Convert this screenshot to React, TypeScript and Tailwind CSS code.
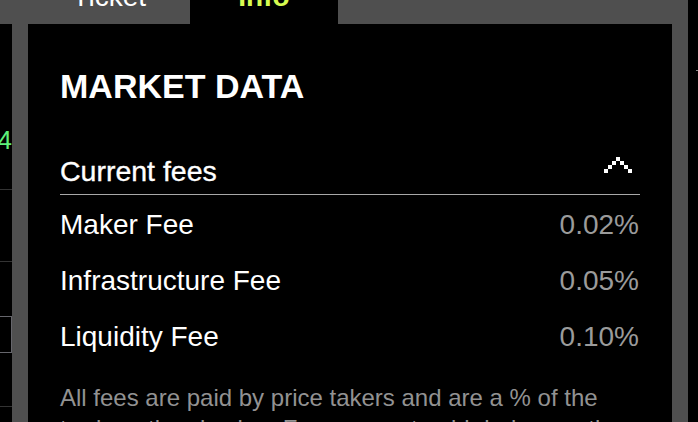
import React from "react";

const font = { fontFamily: '"Liberation Sans", Arial, Helvetica, sans-serif' };

function Chevron() {
  // pixel-art chevron, 4px squares
  return (
    <svg width="28" height="16" viewBox="0 0 28 16" shapeRendering="crispEdges" className="block">
      <rect x="12" y="0" width="4" height="4" fill="#fff" />
      <rect x="8" y="4" width="4" height="4" fill="#fff" />
      <rect x="16" y="4" width="4" height="4" fill="#fff" />
      <rect x="4" y="8" width="4" height="4" fill="#fff" />
      <rect x="20" y="8" width="4" height="4" fill="#fff" />
      <rect x="0" y="12" width="4" height="4" fill="#fff" />
      <rect x="24" y="12" width="4" height="4" fill="#fff" />
    </svg>
  );
}

const fees = [
  { label: "Maker Fee", value: "0.02%" },
  { label: "Infrastructure Fee", value: "0.05%" },
  { label: "Liquidity Fee", value: "0.10%" },
];

export default function App() {
  return (
    <div className="w-[698px] h-[422px] bg-black overflow-hidden flex flex-col" style={font}>
      {/* top tab bar */}
      <div className="h-[24px] shrink-0 flex overflow-hidden">
        <div className="w-[688px] h-[24px] flex bg-[#4f4f4f]">
          <div className="w-[190px] h-[24px] flex justify-end pr-[44px] overflow-hidden">
            <span className="text-white text-[28px] leading-[28px] -mt-[17px] whitespace-nowrap">Ticket</span>
          </div>
          <div className="w-[148px] h-[24px] bg-black flex justify-center overflow-hidden">
            <span className="text-[#d7fb50] font-bold text-[28px] leading-[28px] -mt-[17px] whitespace-nowrap">Info</span>
          </div>
        </div>
        <div className="w-[10px] h-[24px] bg-black" />
      </div>

      {/* body */}
      <div className="flex flex-1 min-h-0">
        {/* left neighbour panel slice */}
        <div className="w-[12px] shrink-0 overflow-hidden flex flex-col">
          <div className="h-[166px] shrink-0 border-b border-[#333333] flex justify-end pt-[103px]">
            <span className="text-[#5ef07a] text-[26px] leading-[26px] whitespace-nowrap">24</span>
          </div>
          <div className="h-[72px] shrink-0 border-b border-[#333333]" />
          <div className="h-[54px] shrink-0" />
          <div className="h-[37px] shrink-0 w-[40px] -ml-[28px] border border-[#66666c]" />
          <div className="h-[54px] shrink-0 border-b border-[#333333]" />
        </div>

        {/* framed panel */}
        <div className="w-[676px] shrink-0 bg-[#4f4f4f] px-[16px] flex">
          <div className="w-[644px] bg-black pt-[45px] px-[32px] flex flex-col">
            <h1 className="text-white font-bold text-[34px] leading-[34px] whitespace-nowrap">MARKET DATA</h1>

            <div className="mt-[54px] flex justify-between items-start border-b-[1.5px] border-[#a8a8a8] pb-[9px]">
              <span className="text-white text-[28.5px] leading-[28px] [-webkit-text-stroke:0.35px_white]">Current fees</span>
              <span className="mr-[8px]">
                <Chevron />
              </span>
            </div>

            <div className="mt-[2px] flex flex-col">
              {fees.map((f) => (
                <div key={f.label} className="h-[56px] flex justify-between text-[28px] leading-[56px]">
                  <span className="text-white">{f.label}</span>
                  <span className="text-[#9b9b9b] pr-[1px]">{f.value}</span>
                </div>
              ))}
            </div>

            <p className="mt-[17px] text-[#929292] text-[24px] leading-[31px]">
              All fees are paid by price takers and are a % of the trade notional value. Fees are not paid during auction uncrossing.
            </p>
          </div>
        </div>

        {/* right neighbour slice */}
        <div className="w-[10px] shrink-0 flex flex-col">
          <div className="h-[46px] shrink-0" />
          <div className="h-[1px] w-[2px] ml-[8px] bg-[#8a8a8a]" />
        </div>
      </div>
    </div>
  );
}
